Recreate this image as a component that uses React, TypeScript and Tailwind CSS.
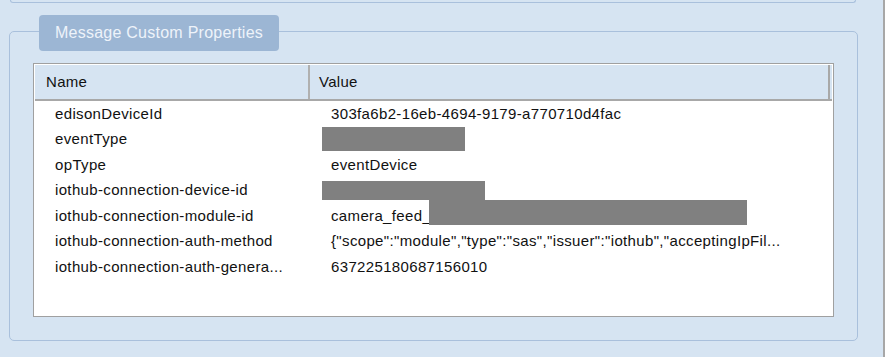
import React from "react";

type Row = { name: string; value: React.ReactNode };

const Redact = ({ className }: { className: string }) => (
  <span className={`inline-block shrink-0 bg-[#808080] ${className}`} />
);

const rows: Row[] = [
  { name: "edisonDeviceId", value: "303fa6b2-16eb-4694-9179-a770710d4fac" },
  { name: "eventType", value: <Redact className="w-[143px] h-[24px] -ml-[9px]" /> },
  { name: "opType", value: "eventDevice" },
  { name: "iothub-connection-device-id", value: <Redact className="w-[163px] h-[19px] -ml-[9px]" /> },
  {
    name: "iothub-connection-module-id",
    value: (
      <>
        <span>camera_feed_</span>
        <Redact className="w-[318px] h-[25px] mb-[6px] -ml-[2px]" />
      </>
    ),
  },
  {
    name: "iothub-connection-auth-method",
    value: '{"scope":"module","type":"sas","issuer":"iothub","acceptingIpFil...',
  },
  { name: "iothub-connection-auth-genera...", value: "637225180687156010" },
];

export default function App() {
  return (
    <div
      className="flex w-[885px] h-[357px] bg-[#d6e4f2] overflow-hidden"
      style={{ fontFamily: '"Liberation Sans", Arial, sans-serif' }}
    >
      <div className="flex-1 flex flex-col">
        {/* bottom of panel above */}
        <div className="ml-[10px] w-[846px] h-[3px] border-x border-b border-[#a9c0dc] rounded-b-[4px]" />
        {/* group box */}
        <div className="relative ml-[9px] mt-[28px] w-[849px] h-[310px] border border-[#a9c0dc] rounded-[5px] pt-[31px] px-[23px] pb-[23px]">
          <div className="absolute left-[29px] top-[-17px] w-[240px] h-[36px] rounded-[4px] bg-[#9cb6d4] flex items-center justify-center text-[16px] tracking-[0.25px] text-[#eef3fa]">
            Message Custom Properties
          </div>
          {/* list view */}
          <div className="h-full flex flex-col border border-[#a0a0a0] bg-white p-[1px]">
            <div className="flex h-[36px] bg-[#d6e4f2] border-b-2 border-[#a8a8a8] text-[15px] tracking-[0.3px] text-[#111]">
              <div className="w-[275px] border-r-2 border-[#b0b0b0] pl-[11px] flex items-center">Name</div>
              <div className="flex-1 border-r-2 border-[#a8a8a8] mr-[2px] pl-[9px] flex items-center">Value</div>
            </div>
            <div className="flex flex-col">
              {rows.map((r, i) => (
                <div
                  key={i}
                  className="flex h-[25.5px] items-center text-[15px] tracking-[0.35px] text-[#111] whitespace-nowrap"
                >
                  <div className="w-[277px] pl-[20px]">{r.name}</div>
                  <div className="flex-1 pl-[19px] flex items-center">{r.value}</div>
                </div>
              ))}
            </div>
          </div>
        </div>
      </div>
      {/* right window edge */}
      <div className="w-[2px] h-full bg-[#a7a7a7]" />
    </div>
  );
}
